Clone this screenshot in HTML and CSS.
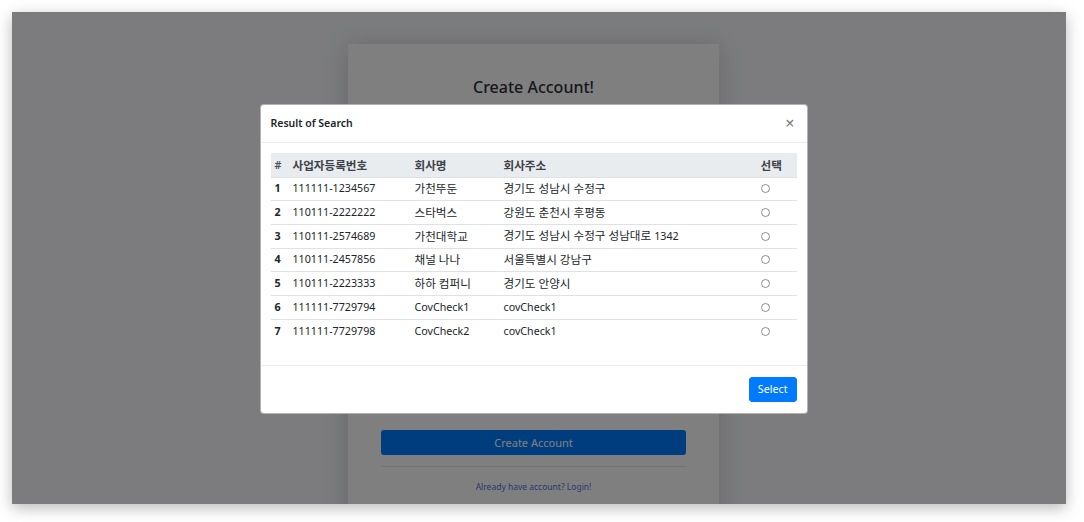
FILE: index.html
```html
<!DOCTYPE html>
<html lang="en">
<head>
<meta charset="utf-8">
<title>Create Account</title>
<link rel="stylesheet" href="styles.css">
</head>
<body>
<div class="window">
  <div class="page">
    <div class="card">
      <h1 class="card-title">Create Account!</h1>
      <form class="form">
        <div class="form-row">
          <input class="input" type="text" placeholder="사업자등록번호">
          <span class="input-btn">Search</span>
        </div>
        <input class="input" type="text" placeholder="회사명">
        <input class="input" type="text" placeholder="회사주소">
        <input class="input" type="text" placeholder="Name">
        <input class="input" type="email" placeholder="Email Address">
      </form>
      <button class="btn-create" type="button">Create Account</button>
      <hr class="divider">
      <div class="login-link"><a href="#">Already have account? Login!</a></div>
    </div>
  </div>
  <div class="backdrop"></div>
  <div class="modal-layer">
    <div class="modal">
      <div class="modal-header">
        <h5 class="modal-title">Result of Search</h5>
        <span class="close">&times;</span>
      </div>
      <div class="modal-body">
        <table class="table">
          <colgroup>
            <col class="c-num"><col class="c-reg"><col class="c-name"><col class="c-addr"><col class="c-sel">
          </colgroup>
          <thead>
            <tr><th class="th-num">#</th><th lang="ko">사업자등록번호</th><th lang="ko">회사명</th><th lang="ko">회사주소</th><th lang="ko">선택</th></tr>
          </thead>
          <tbody>
            <tr><th>1</th><td>111111-1234567</td><td lang="ko">가천뚜둔</td><td lang="ko">경기도 성남시 수정구</td><td><span class="radio"></span></td></tr>
            <tr><th>2</th><td>110111-2222222</td><td lang="ko">스타벅스</td><td lang="ko">강원도 춘천시 후평동</td><td><span class="radio"></span></td></tr>
            <tr><th>3</th><td>110111-2574689</td><td lang="ko">가천대학교</td><td lang="ko">경기도 성남시 수정구 성남대로 <span lang="en">1342</span></td><td><span class="radio"></span></td></tr>
            <tr><th>4</th><td>110111-2457856</td><td lang="ko">채널 나나</td><td lang="ko">서울특별시 강남구</td><td><span class="radio"></span></td></tr>
            <tr><th>5</th><td>110111-2223333</td><td lang="ko">하하 컴퍼니</td><td lang="ko">경기도 안양시</td><td><span class="radio"></span></td></tr>
            <tr><th>6</th><td>111111-7729794</td><td>CovCheck1</td><td>covCheck1</td><td><span class="radio"></span></td></tr>
            <tr><th>7</th><td>111111-7729798</td><td>CovCheck2</td><td>covCheck1</td><td><span class="radio"></span></td></tr>
          </tbody>
        </table>
      </div>
      <div class="modal-footer">
        <button class="btn-select" type="button">Select</button>
      </div>
    </div>
  </div>
</div>
</body>
</html>
```

FILE: styles.css
```css
* { box-sizing: border-box; }

html, body {
  margin: 0;
  height: 522px;
  overflow: hidden;
  background: #ffffff;
  font-family: "Noto Sans", "Noto Sans CJK KR", sans-serif;
}

.window {
  position: relative;
  margin: 12px;
  width: 1054px;
  height: 492px;
  overflow: hidden;
  background: #f8f9fc;
  box-shadow: 0 4px 14px rgba(0, 0, 0, 0.28);
}

.page {
  width: 1043px;
  height: 100%;
  display: flex;
  justify-content: center;
  align-items: flex-start;
  padding-top: 32px;
}

.card {
  width: 371px;
  background: #ffffff;
  padding: 33px 33px 40px;
  box-shadow: 0 2px 24px rgba(58, 59, 69, 0.22);
  display: flex;
  flex-direction: column;
}

.card-title {
  margin: 0 0 20px;
  text-align: center;
  font-size: 16px;
  line-height: 20px;
  font-weight: 500;
  color: #2e2f38;
}

.form {
  height: 313px;
  display: flex;
  flex-direction: column;
  gap: 12px;
  padding-top: 8px;
}

.form-row {
  display: flex;
  gap: 10px;
}

.input {
  flex: 0 0 auto;
  min-width: 0;
  width: 100%;
  height: 32px;
  border: 1px solid #d1d3e2;
  border-radius: 16px;
  padding: 0 14px;
  font: inherit;
  font-size: 11px;
}

.form-row .input {
  flex: 1;
  width: auto;
}

.input-btn {
  background: #4e73df;
  color: #fff;
  font-size: 11px;
  border-radius: 16px;
  padding: 8px 14px;
}

.btn-create {
  height: 25px;
  border: none;
  border-radius: 3px;
  background: #007bff;
  color: #ffffff;
  font: inherit;
  font-size: 11px;
}

.divider {
  margin: 11px 0 0;
  border: 0;
  border-top: 1px solid #e3e6f0;
}

.login-link {
  margin-top: 14px;
  text-align: center;
  font-size: 8.5px;
  line-height: 12px;
}

.login-link a {
  color: #4e73df;
  text-decoration: none;
}

.backdrop {
  position: absolute;
  inset: 0;
  background: rgba(0, 0, 0, 0.5);
}

.modal-layer {
  position: absolute;
  inset: 0;
  padding-top: 92px;
  width: 1043px;
  display: flex;
  justify-content: center;
  align-items: flex-start;
}

.modal {
  width: 548px;
  background: #ffffff;
  border: 1px solid rgba(0, 0, 0, 0.3);
  border-radius: 4px;
  color: #212529;
}

.modal-header {
  display: flex;
  align-items: center;
  justify-content: space-between;
  padding: 11px 12px 11px 10px;
  border-bottom: 1px solid #e9ecef;
}

.modal-title {
  margin: 0;
  font-size: 10.5px;
  line-height: 15px;
  font-weight: 600;
}

.close {
  font-size: 16px;
  line-height: 15px;
  color: #000;
  opacity: 0.55;
}

.modal-body {
  padding: 10px;
}

.table {
  width: 526px;
  border-collapse: collapse;
  table-layout: fixed;
  margin-bottom: 12px;
  font-size: 10.7px;
}

.c-num { width: 18px; }
.c-reg { width: 122px; }
.c-name { width: 89px; }
.c-addr { width: 257px; }
.c-sel { width: 40px; }

.table th,
.table td {
  padding: 0 4px;
  height: 23.7px;
  text-align: left;
  white-space: nowrap;
  vertical-align: middle;
  line-height: 15px;
}

.table :lang(ko) {
  font-size: 11.6px;
}

.table :lang(ko) :lang(en) {
  font-size: 10.7px;
}

.table tbody tr {
  border-top: 1px solid #dee2e6;
}

.table thead th {
  height: 24px;
  padding-top: 2px;
  background: #e9ecef;
  color: #3d4248;
  font-weight: 700;
}

.table thead .th-num {
  font-weight: 600;
  color: #495057;
}

.table tbody th {
  font-weight: 700;
}

.radio {
  display: block;
  width: 9px;
  height: 9px;
  border: 1px solid #8d8d8d;
  border-radius: 50%;
  background: #fff;
}

.modal-footer {
  display: flex;
  justify-content: flex-end;
  padding: 11px 10px 11px;
  border-top: 1px solid #e9ecef;
}

.btn-select {
  height: 25px;
  padding: 0 8px;
  border: 1px solid #007bff;
  border-radius: 3px;
  background: #007bff;
  color: #ffffff;
  font: inherit;
  font-size: 10.7px;
}
```
